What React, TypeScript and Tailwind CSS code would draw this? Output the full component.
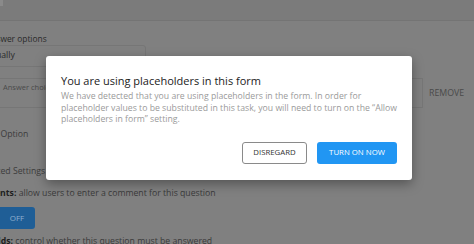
import React from "react";

export default function App() {
  return (
    <div
      className="relative w-[474px] h-[244px] overflow-hidden bg-[#808080]"
      style={{ fontFamily: '"Open Sans", "Liberation Sans", sans-serif' }}
    >
      {/* underlying page (already dimmed) */}
      <div className="flex flex-col">
        <div className="h-[21px] border-b border-[#747474] bg-[#7b7b7b] flex items-start">
          <div className="w-[3px] h-[6px] bg-[#8a8a8a]" />
        </div>
        <div className="mt-[12px] ml-[-14px] text-[8.4px] leading-[12px] text-[#2a2a2a] whitespace-nowrap">
          Answer options
        </div>
        <div className="ml-[-30px] w-[176px] h-[22px] border border-[#767676] rounded-[3px] flex items-center pl-[7px] text-[8.7px] text-[#2a2a2a] whitespace-nowrap">
          Manually
        </div>
        <div className="mt-[11px] flex items-center">
          <div className="ml-[-10px] w-[433px] h-[30px] border border-[#767676] flex items-start pt-[3px] pl-[12px] text-[7.5px] text-[#4a4a4a]">
            Answer choice
          </div>
          <div className="ml-[6px] mt-[2px] text-[8.8px] text-[#4a4a4a]">REMOVE</div>
        </div>
        <div className="mt-[20px] ml-[-18px] text-[8.7px] leading-[12px] text-[#3c3c3c] whitespace-nowrap">Add Option</div>
        <div className="mt-[25px] ml-[-29px] text-[8.7px] leading-[12px] text-[#3c3c3c] whitespace-nowrap">
          Advanced Settings
        </div>
        <div className="mt-[10px] ml-[-33px] text-[8.7px] leading-[12px] text-[#3a3a3a] whitespace-nowrap">
          <span className="font-bold text-[#1e1e1e]">Comments:</span> allow users to enter a comment for this question
        </div>
        <div className="mt-[8px] ml-[-3px] w-[38px] h-[22px] rounded-[3px] bg-[#1f5e96] flex items-center justify-center pl-[2px] text-[8px] text-[#8fb0cf]">
          OFF
        </div>
        <div className="mt-[6px] ml-[-56px] text-[8.7px] leading-[12px] text-[#3a3a3a] whitespace-nowrap">
          <span className="font-bold text-[#1e1e1e]">Required Fields:</span> control whether this question must be answered
        </div>
      </div>

      {/* modal */}
      <div className="absolute left-[46px] top-[56px] w-[366px] h-[124px] bg-white rounded-[3px] shadow-[0_4px_12px_rgba(0,0,0,0.35)] px-[15px] pt-[18px] flex flex-col">
        <div className="text-[11px] leading-[14px] text-[#222]">You are using placeholders in this form</div>
        <div className="mt-[3px] text-[8.7px] leading-[11.6px] text-[#9a9a9a]">
          We have detected that you are using placeholders in the form. In order for placeholder values to be
          substituted in this task, you will need to turn on the “Allow placeholders in form” setting.
        </div>
        <div className="mt-auto mb-[16px] flex justify-end gap-[10px]">
          <button className="w-[65px] h-[22px] border border-[#8a8a8a] rounded-[3px] text-[7.8px] text-[#333] bg-white">
            DISREGARD
          </button>
          <button className="w-[80px] h-[22px] rounded-[3px] text-[7.8px] text-white bg-[#2196f3]">
            TURN ON NOW
          </button>
        </div>
      </div>
    </div>
  );
}
